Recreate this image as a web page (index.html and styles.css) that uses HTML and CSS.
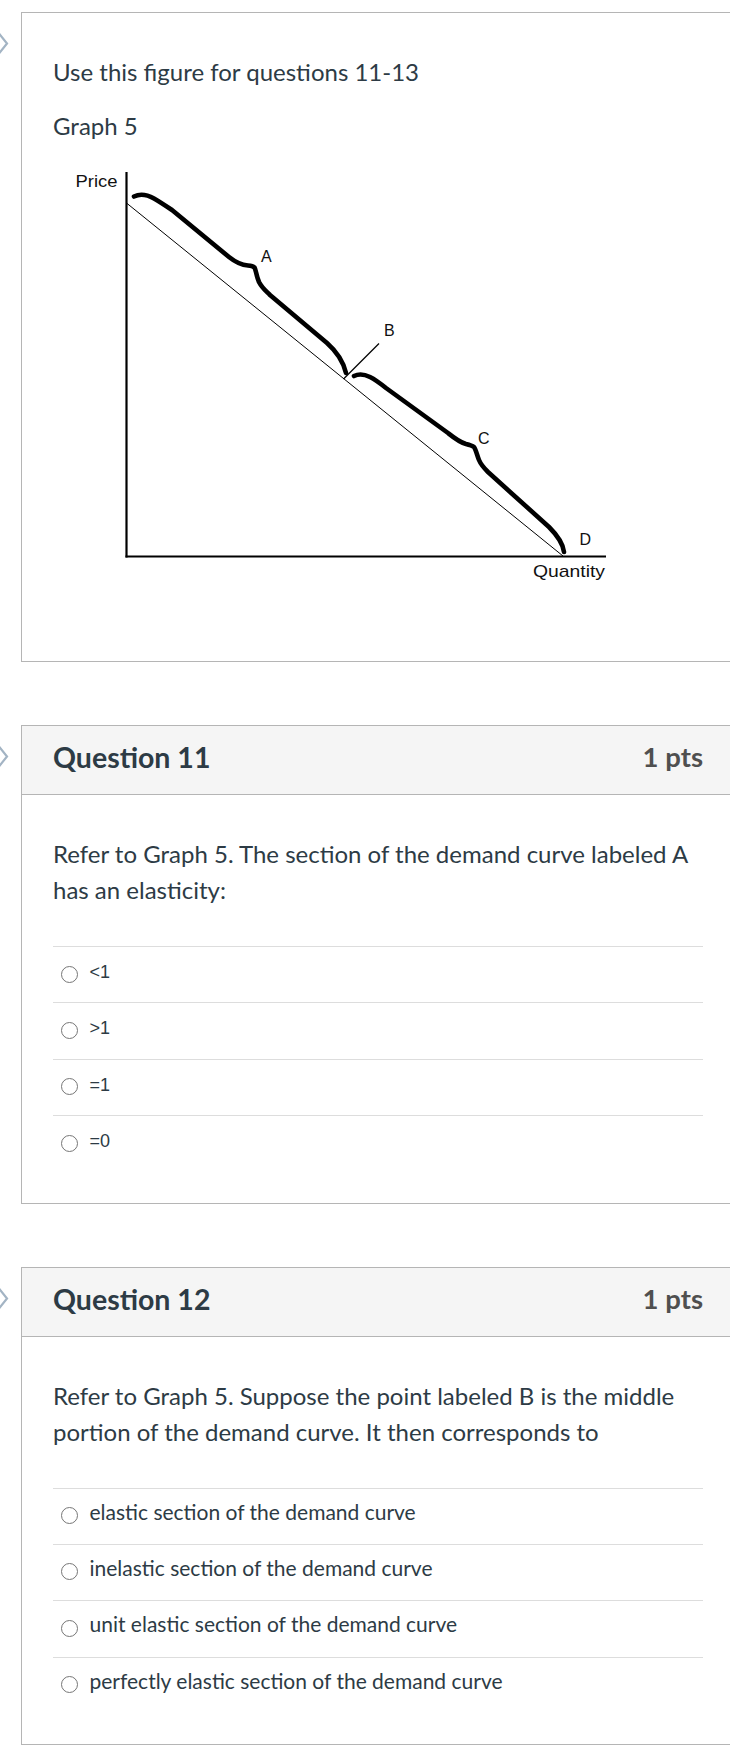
FILE: index.html
```html
<!DOCTYPE html>
<html lang="en">
<head>
<meta charset="utf-8">
<title>Quiz</title>
<link rel="stylesheet" href="styles.css">
</head>
<body>
<div class="page">

  <div class="item">
    <div class="gutter">
      <svg class="chev" width="21" height="22" viewBox="0 0 21 22"><polyline points="-1.5,0 7,10.5 -1.5,21" /></svg>
    </div>
    <div class="panel">
      <div class="panel-body intro">
        <p class="qp">Use this figure for questions 11-13</p>
        <p class="qp">Graph 5</p>
        <svg class="graph" width="560" height="430" viewBox="53 162 560 430">
          <text class="glabel" x="75.5" y="186.5" textLength="42" lengthAdjust="spacingAndGlyphs">Price</text>
          <line class="axis" x1="126.5" y1="172" x2="126.5" y2="557.5"/>
          <line class="axis" x1="125.5" y1="556.5" x2="606" y2="556.5"/>
          <line class="thin" x1="126.5" y1="203" x2="563" y2="556"/>
          <path class="brace" d="M134 196.5 C139 194 146 194 154 198.5 C160 202 166 206 172 210 L229 257 C234 261 241 265 248 265.5 C251 265.7 253 266 254.5 267.5 C256 270 256 275 259 282 C262 288 266 291 270 295 L327 343 C336 351 343 360 346 373"/>
          <line class="tick" x1="343.5" y1="379" x2="379" y2="343.5"/>
          <path class="brace" d="M354 376 C358 374 364 374 370 377 C376 380 381 384 386 388 L448 433 C453 437 459 442 466 444 C470 445 472 445.5 474 447 C476 450 477 455 479 460 C481 465 484 468 488 472 L549 527 C557 535 563 543 564 552"/>
          <text class="glabel small" x="261" y="262">A</text>
          <text class="glabel small" x="384" y="336">B</text>
          <text class="glabel small" x="478" y="443.5">C</text>
          <text class="glabel small" x="579.5" y="545">D</text>
          <text class="glabel" x="533" y="577" textLength="72" lengthAdjust="spacingAndGlyphs">Quantity</text>
        </svg>
      </div>
    </div>
  </div>

  <div class="item">
    <div class="gutter">
      <svg class="chev" width="21" height="22" viewBox="0 0 21 22"><polyline points="-1.5,0 7,10.5 -1.5,21" /></svg>
    </div>
    <div class="panel">
      <div class="qhead">
        <h2 class="qname">Question 11</h2>
        <div class="qpts">1 pts</div>
      </div>
      <div class="panel-body">
        <p class="qp">Refer to Graph 5. The section of the demand curve labeled A has an elasticity:</p>
        <div class="answers">
          <div class="answer"><span class="radio"></span><span class="label"><span class="arial">&lt;1</span></span></div>
          <div class="answer"><span class="radio"></span><span class="label"><span class="arial">&gt;1</span></span></div>
          <div class="answer"><span class="radio"></span><span class="label"><span class="arial">=1</span></span></div>
          <div class="answer"><span class="radio"></span><span class="label"><span class="arial">=0</span></span></div>
        </div>
      </div>
    </div>
  </div>

  <div class="item">
    <div class="gutter">
      <svg class="chev" width="21" height="22" viewBox="0 0 21 22"><polyline points="-1.5,0 7,10.5 -1.5,21" /></svg>
    </div>
    <div class="panel">
      <div class="qhead">
        <h2 class="qname">Question 12</h2>
        <div class="qpts">1 pts</div>
      </div>
      <div class="panel-body">
        <p class="qp">Refer to Graph 5. Suppose the point labeled B is the middle portion of the demand curve. It then corresponds to</p>
        <div class="answers">
          <div class="answer"><span class="radio"></span><span class="label">elastic section of the demand curve</span></div>
          <div class="answer"><span class="radio"></span><span class="label">inelastic section of the demand curve</span></div>
          <div class="answer"><span class="radio"></span><span class="label">unit elastic section of the demand curve</span></div>
          <div class="answer"><span class="radio"></span><span class="label">perfectly elastic section of the demand curve</span></div>
        </div>
      </div>
    </div>
  </div>

</div>
</body>
</html>
```
FILE: styles.css
```css
html, body {
  margin: 0;
  padding: 0;
  background: #ffffff;
}
body {
  width: 730px;
  overflow: hidden;
  font-family: Lato, "Open Sans", sans-serif;
  color: #2d3b45;
}
.page {
  padding-top: 12px;
}
.item {
  display: flex;
  margin-bottom: 63px;
}
.gutter {
  flex: 0 0 21px;
}
.chev {
  display: block;
  margin-top: 21px;
  overflow: visible;
}
.chev polyline {
  fill: none;
  stroke: #a3b4c4;
  stroke-width: 2.2;
}
.panel {
  flex: 0 0 714px;
  box-sizing: border-box;
  border: 1px solid #b5b5b5;
}
.panel-body {
  padding: 41px 31px 31px;
}
.panel-body.intro {
  padding-bottom: 69px;
}
.qp {
  margin: 0 0 18px;
  font-size: 24px;
  line-height: 36px;
}
.graph {
  display: block;
}
.glabel {
  font-family: "Liberation Sans", Arial, sans-serif;
  font-size: 17px;
  fill: #111;
}
.glabel.small {
  font-size: 16px;
}
.axis {
  stroke: #000;
  stroke-width: 2.2;
}
.thin {
  stroke: #000;
  stroke-width: 1;
}
.tick {
  stroke: #000;
  stroke-width: 1.2;
}
.brace {
  fill: none;
  stroke: #000;
  stroke-width: 4.6;
  stroke-linecap: round;
  stroke-linejoin: round;
}
.qhead {
  display: flex;
  justify-content: space-between;
  align-items: flex-start;
  height: 68px;
  padding: 0 31px;
  background: #f5f5f5;
  border-bottom: 1px solid #b5b5b5;
}
.qname, .qpts {
  margin: 0;
  padding-top: 14px;
  line-height: 34px;
  font-weight: 700;
}
.qname {
  font-size: 28.5px;
  color: #2d3b45;
}
.qpts {
  font-size: 27.5px;
  color: #4f4f4f;
}
.answers {
  margin-top: 38px;
}
.answer {
  display: flex;
  align-items: flex-start;
  border-top: 1px solid #dddddd;
  padding: 11px 0 19.9px 7.5px;
}
.radio {
  flex: 0 0 17px;
  width: 17px;
  height: 17px;
  box-sizing: border-box;
  margin-top: 7.5px;
  border: 1.5px solid #767676;
  border-radius: 50%;
}
.label {
  margin-left: 12px;
  font-size: 21px;
  line-height: 24px;
}
.arial {
  font-family: "Liberation Sans", Arial, sans-serif;
  font-size: 18px;
  line-height: 1;
}
```
